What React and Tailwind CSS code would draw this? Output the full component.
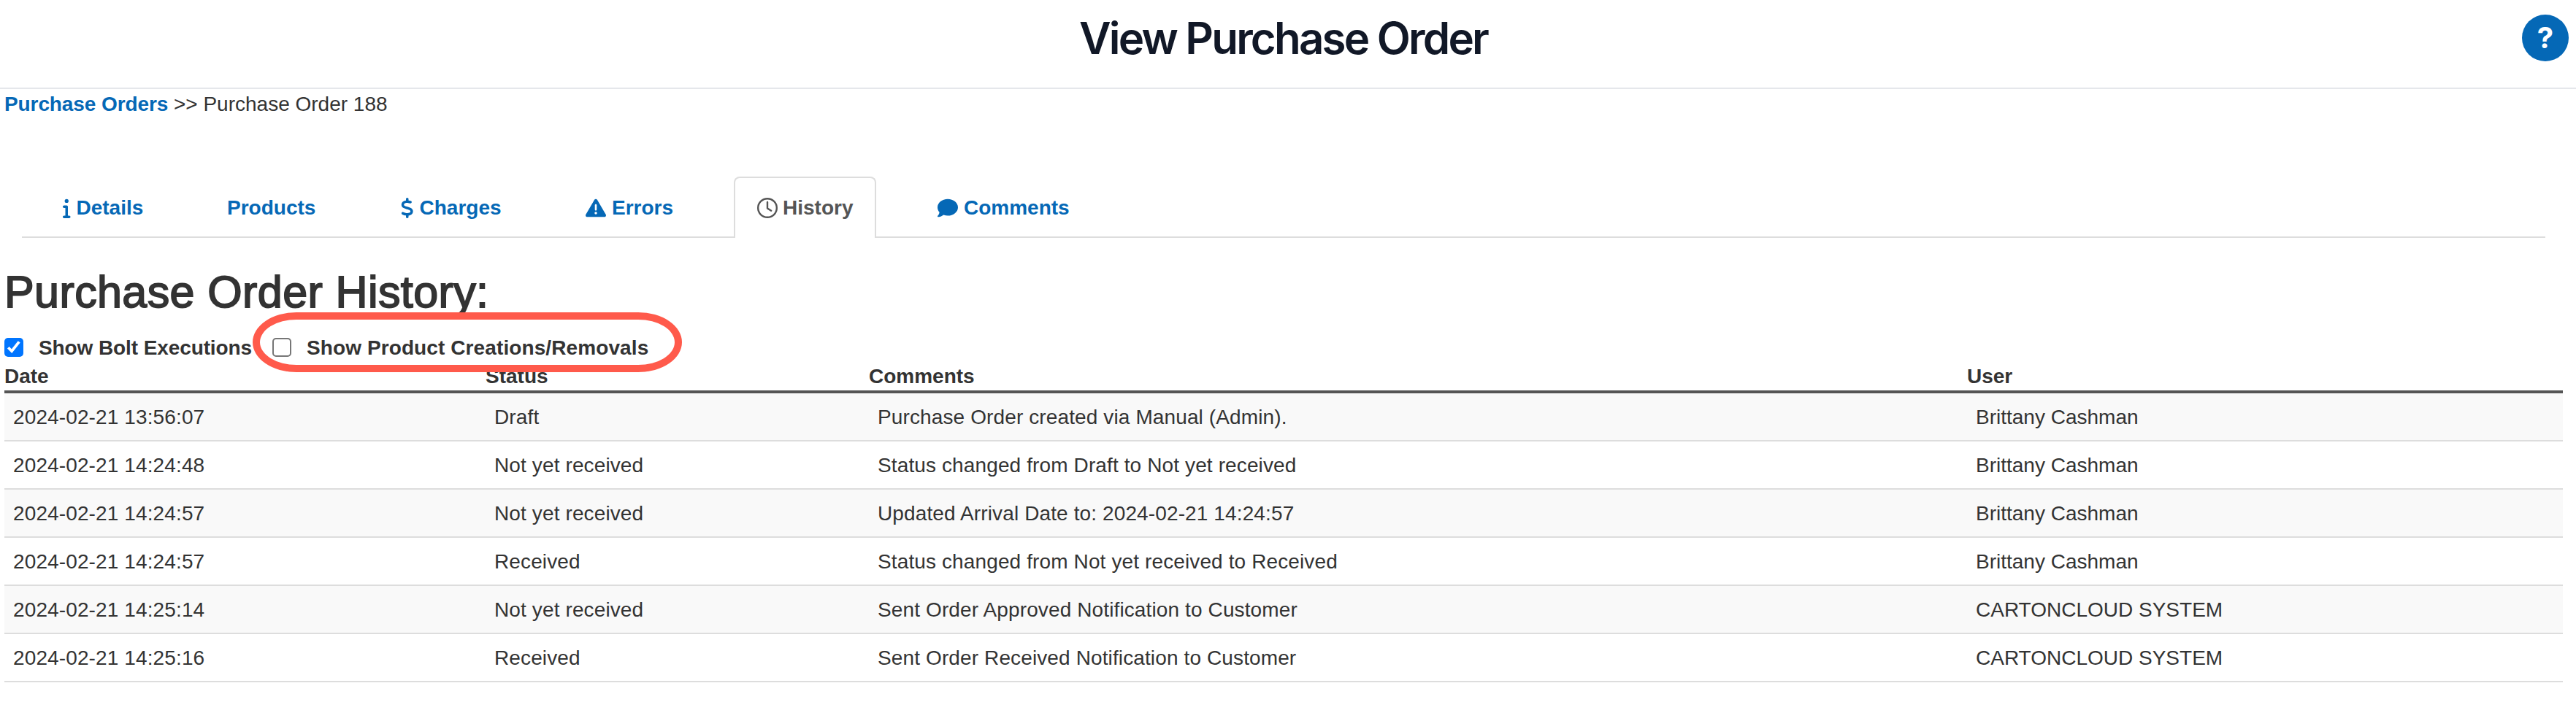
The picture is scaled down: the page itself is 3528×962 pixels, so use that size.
import React, { useState } from "react";
import { FaComment, FaDollarSign, FaInfo, FaTriangleExclamation } from "react-icons/fa6";

const tabs = [
  { id: "details", label: "Details", icon: "info", width: "w-[173px]" },
  { id: "products", label: "Products", width: "w-[186px]" },
  { id: "charges", label: "Charges", icon: "dollar", width: "w-[201px]" },
  { id: "errors", label: "Errors", icon: "warning", width: "w-[183px]" },
  { id: "history", label: "History", icon: "clock", width: "w-[195px]" },
  { id: "comments", label: "Comments", icon: "comment", width: "w-[245px]" },
];

const history = [
  { date: "2024-02-21 13:56:07", status: "Draft", comment: "Purchase Order created via Manual (Admin).", user: "Brittany Cashman" },
  { date: "2024-02-21 14:24:48", status: "Not yet received", comment: "Status changed from Draft to Not yet received", user: "Brittany Cashman" },
  { date: "2024-02-21 14:24:57", status: "Not yet received", comment: "Updated Arrival Date to: 2024-02-21 14:24:57", user: "Brittany Cashman" },
  { date: "2024-02-21 14:24:57", status: "Received", comment: "Status changed from Not yet received to Received", user: "Brittany Cashman" },
  { date: "2024-02-21 14:25:14", status: "Not yet received", comment: "Sent Order Approved Notification to Customer", user: "CARTONCLOUD SYSTEM" },
  { date: "2024-02-21 14:25:16", status: "Received", comment: "Sent Order Received Notification to Customer", user: "CARTONCLOUD SYSTEM" },
];

function TabIcon({ name }) {
  if (name === "info") return <FaInfo className="mr-2 h-[28px] w-[10.5px] shrink-0" />;
  if (name === "dollar") return <FaDollarSign className="mr-2 h-[28px] w-[17.5px] shrink-0" />;
  if (name === "warning") return <FaTriangleExclamation className="mr-2 size-[28px] shrink-0" />;
  if (name === "comment") return <FaComment className="mr-2 size-[28px] shrink-0" />;
  if (name === "clock") {
    return (
      <svg
        viewBox="0 0 28 28"
        fill="none"
        stroke="currentColor"
        strokeWidth="2.4"
        strokeLinecap="round"
        strokeLinejoin="round"
        className="mr-[7px] size-[28px] shrink-0"
      >
        <circle cx="14" cy="14" r="12.8" />
        <path d="M14 6v8.4l5.2 3.3" />
      </svg>
    );
  }
  return null;
}

function Checkbox({ label, checked, onChange, className }) {
  return (
    <label className={`flex items-center font-bold whitespace-nowrap ${className}`}>
      <input type="checkbox" className="sr-only" checked={checked} onChange={onChange} />
      {checked ? (
        <span className="flex size-[26px] shrink-0 items-center justify-center rounded-[5px] bg-[#0075ff]">
          <svg viewBox="0 0 26 26" fill="none" stroke="white" strokeWidth="3.8" className="size-[26px]">
            <path d="M5.3 13.2l4.8 5L20.2 5.3" />
          </svg>
        </span>
      ) : (
        <span className="size-[26px] shrink-0 rounded-[5px] border-2 border-[#767676] bg-white" />
      )}
      <span className="ml-[21px] pt-px">{label}</span>
    </label>
  );
}

export default function App() {
  const [activeTab, setActiveTab] = useState("history");
  const [showBolt, setShowBolt] = useState(true);
  const [showProducts, setShowProducts] = useState(false);

  return (
    <div className="h-[962px] w-[3528px] overflow-hidden bg-white font-['Liberation_Sans',Arial,sans-serif] text-[28px] leading-[40px] text-[#333]">
      {/* Header */}
      <header className="flex h-[122px] items-start border-b-2 border-[#e5e7eb]">
        <div className="w-[61px]" />
        <h1 className="flex-1 pt-[16px] text-center font-['Inter',sans-serif] text-[60px] leading-[72px] font-semibold tracking-[-2.8px] text-[#111827]">
          View Purchase Order
        </h1>
        <button className="mt-[20px] mr-[10px] flex size-[64px] items-center justify-center rounded-full bg-[#0568b6] font-['Inter',sans-serif] text-[40px] font-bold text-white">
          ?
        </button>
      </header>

      {/* Breadcrumb */}
      <div className="h-[120px] pt-px pl-[6px]">
        <a className="font-bold tracking-[-0.1px] text-[#0568b6]">Purchase Orders</a> &gt;&gt; Purchase Order 188
      </div>

      {/* Tabs */}
      <nav className="mr-[42px] ml-[30px] flex h-[84px] gap-[52px] border-b-2 border-[#ddd] pl-[24px]">
        {tabs.map((tab) => (
          <button
            key={tab.id}
            onClick={() => setActiveTab(tab.id)}
            className={`flex h-[84px] items-center border-2 border-b-0 pb-px pl-[30px] font-bold whitespace-nowrap ${tab.width} ${
              activeTab === tab.id
                ? "rounded-t-[8px] border-[#ddd] bg-white text-[#555]"
                : "border-transparent text-[#0568b6]"
            }`}
          >
            <TabIcon name={tab.icon} />
            {tab.label}
          </button>
        ))}
      </nav>

      {/* History */}
      <h2 className="mt-[38px] pl-[6px] text-[61px] leading-[72px] tracking-[0.4px] [-webkit-text-stroke:1.8px_#333]">
        Purchase Order History:
      </h2>
      <div className="relative mt-[19px] flex h-[42px] items-center gap-[28px] pl-[6px]">
        <Checkbox
          label="Show Bolt Executions"
          className="w-[339px] tracking-[-0.1px]"
          checked={showBolt}
          onChange={() => setShowBolt(!showBolt)}
        />
        <Checkbox
          label="Show Product Creations/Removals"
          className="tracking-[0.1px]"
          checked={showProducts}
          onChange={() => setShowProducts(!showProducts)}
        />
        <div className="pointer-events-none absolute top-[-27px] left-[346px] h-[82px] w-[588px] rounded-[60px/41px] border-[10px] border-[#ff5a4b]" />
      </div>

      <table className="ml-[6px] w-[3504px] table-fixed border-separate border-spacing-0">
        <thead>
          <tr className="text-left leading-[38px] *:border-b-4 *:border-[#555] *:p-0">
            <th className="w-[659px]">Date</th>
            <th className="w-[525px]">Status</th>
            <th className="w-[1504px]">Comments</th>
            <th>User</th>
          </tr>
        </thead>
        <tbody>
          {history.map((row) => (
            <tr
              key={row.date + row.status}
              className="odd:bg-[#f9f9f9] *:h-[66px] *:border-b-2 *:border-[#ddd] *:px-3 *:pt-px *:pb-0"
            >
              <td className="tracking-[0.12px]">{row.date}</td>
              <td className="tracking-[0.12px]">{row.status}</td>
              <td className="tracking-[0.12px]">{row.comment}</td>
              <td>{row.user}</td>
            </tr>
          ))}
        </tbody>
      </table>
    </div>
  );
}
